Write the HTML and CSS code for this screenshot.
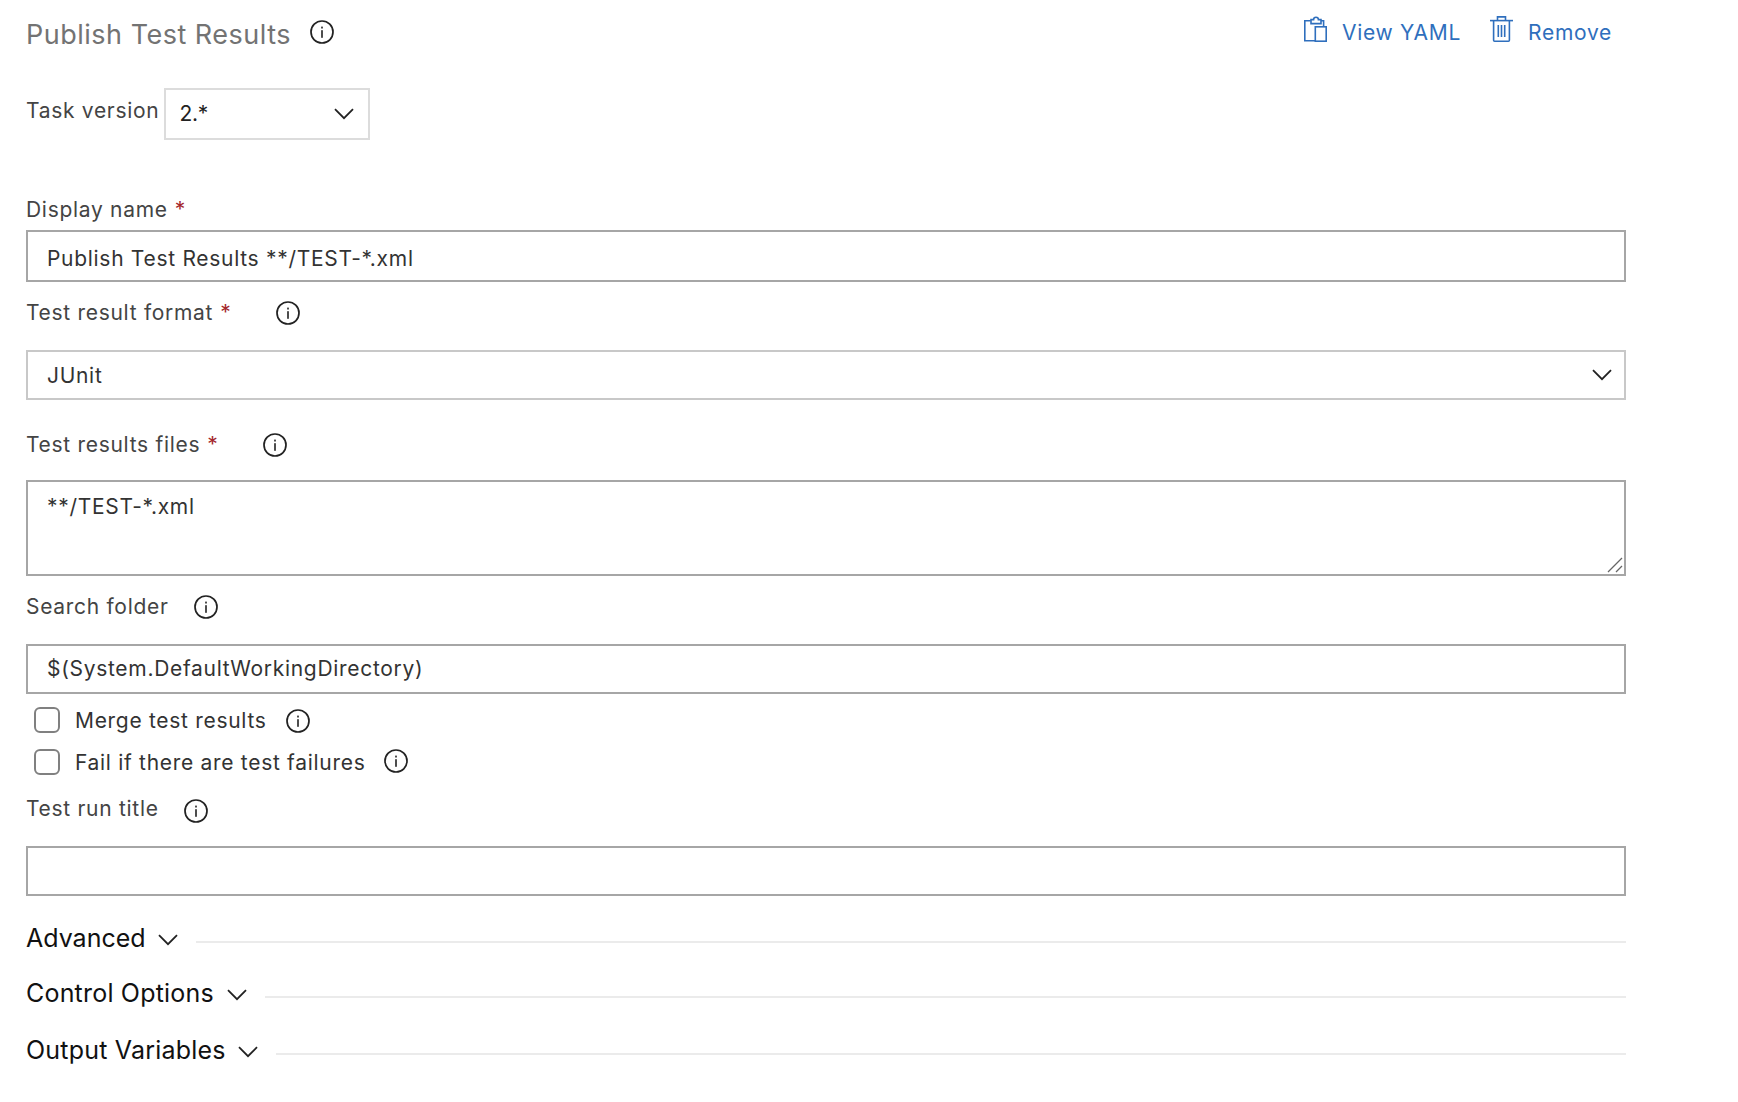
FILE: index.html
```html
<!DOCTYPE html>
<html lang="en">
<head>
<meta charset="utf-8">
<title>Publish Test Results</title>
<link rel="stylesheet" href="styles.css">
</head>
<body>
<svg class="defs" width="0" height="0" aria-hidden="true">
  <symbol id="info" viewBox="0 0 24 24">
    <circle cx="12" cy="12" r="11" fill="none" stroke="currentColor" stroke-width="1.7"/>
    <rect x="11.2" y="10.2" width="1.6" height="7.6" fill="currentColor"/>
    <rect x="11.2" y="6.6" width="1.6" height="1.9" fill="currentColor"/>
  </symbol>
  <symbol id="chev" viewBox="0 0 20 12">
    <path d="M1 1.2 10 10.2 19 1.2" fill="none" stroke="currentColor" stroke-width="1.8"/>
  </symbol>
</svg>
<main class="page">
  <header class="head">
    <div class="title-wrap">
      <h1 class="title">Publish Test Results</h1>
      <svg class="info"><use href="#info"/></svg>
    </div>
    <div class="actions">
      <a class="action action-yaml">
        <svg class="act-icon" viewBox="0 0 23 26" fill="none" stroke="currentColor" stroke-width="1.6">
          <path d="M11 24.8H.8V4.8h6"/><path d="M17 4.8h2.6v6"/><path d="M7 7.6V3.6h2.6a2.4 2.4 0 0 1 4.8 0H17v4z"/><rect x="11.3" y="10.8" width="10.9" height="14.4"/>
        </svg>
        <span>View YAML</span>
      </a>
      <a class="action action-remove">
        <svg class="act-icon" viewBox="0 0 23 26" fill="none" stroke="currentColor" stroke-width="1.6">
          <path d="M0 4.6h23"/><path d="M7.5 4.6V.9h8v3.7"/><path d="M3.6 4.6v19.6a1 1 0 0 0 1 1h13.8a1 1 0 0 0 1-1V4.6"/><path d="M8.3 9v12M11.5 9v12M14.7 9v12"/>
        </svg>
        <span>Remove</span>
      </a>
    </div>
  </header>

  <div class="version-row">
    <span class="label">Task version</span>
    <div class="version-select">
      <span class="version-value">2.*</span>
      <svg class="chev"><use href="#chev"/></svg>
    </div>
  </div>

  <div class="label-row lr-display"><span class="label">Display name</span><span class="req">*</span></div>
  <div class="field input name-input">Publish Test Results **/TEST-*.xml</div>

  <div class="label-row lr-format">
    <span class="label">Test result format</span><span class="req">*</span>
    <svg class="info gap-req"><use href="#info"/></svg>
  </div>
  <div class="field select">
    <span>JUnit</span>
    <svg class="chev"><use href="#chev"/></svg>
  </div>

  <div class="label-row lr-files">
    <span class="label">Test results files</span><span class="req">*</span>
    <svg class="info gap-req"><use href="#info"/></svg>
  </div>
  <div class="field textarea">
    **/TEST-*.xml
    <svg class="grip" viewBox="0 0 16 16" fill="none" stroke="#666" stroke-width="1.3"><path d="M1 15 15 1M9 15l6-6"/></svg>
  </div>

  <div class="label-row lr-search">
    <span class="label">Search folder</span>
    <svg class="info gap-plain"><use href="#info"/></svg>
  </div>
  <div class="field input">$(System.DefaultWorkingDirectory)</div>

  <div class="check-row cr-merge">
    <span class="box"></span><span class="check-label">Merge test results</span>
    <svg class="info gap-check"><use href="#info"/></svg>
  </div>
  <div class="check-row cr-fail">
    <span class="box"></span><span class="check-label">Fail if there are test failures</span>
    <svg class="info gap-check"><use href="#info"/></svg>
  </div>

  <div class="label-row lr-title">
    <span class="label">Test run title</span>
    <svg class="info gap-plain"><use href="#info"/></svg>
  </div>
  <div class="field input"></div>

  <div class="section s-first"><span class="sec-name">Advanced</span><svg class="chev sec-chev"><use href="#chev"/></svg><span class="rule"></span></div>
  <div class="section s-second"><span class="sec-name">Control Options</span><svg class="chev sec-chev"><use href="#chev"/></svg><span class="rule"></span></div>
  <div class="section s-third"><span class="sec-name">Output Variables</span><svg class="chev sec-chev"><use href="#chev"/></svg><span class="rule"></span></div>
</main>
</body>
</html>
```
FILE: styles.css
```css
* { box-sizing: border-box; }
html, body { margin: 0; background: #fff; }
body { font-family: Inter, "Noto Sans", "Liberation Sans", sans-serif; color: #333; font-size: 21px; letter-spacing: 0.7px; line-height: 26px; }
.defs { position: absolute; }
.page { width: 1600px; margin-left: 26px; height: 1102px; overflow: hidden; }

.head { display: flex; justify-content: space-between; align-items: center; height: 63px; }
.title-wrap { display: flex; align-items: center; padding-top: 6px; }
.title { margin: 0; font-size: 27px; font-weight: 400; line-height: 32px; letter-spacing: 0.5px; color: #737373; }
.info { width: 24px; height: 24px; color: #222; flex: none; }
.title-wrap .info { margin-left: 19px; margin-top: -6px; }
.actions { display: flex; align-items: center; padding-right: 14px; padding-top: 2px; color: #2f6fbd; }
.action { display: flex; align-items: center; color: #2f6fbd; letter-spacing: 0.72px; }
.action-remove { margin-left: 29px; }
.act-icon { width: 23px; height: 26px; margin-right: 15px; margin-top: -7px; }

.version-row { display: flex; align-items: flex-start; margin-top: 25px; }
.version-row .label { margin-top: 10px; margin-right: 5px; }
.version-select { width: 206px; height: 52px; border: 2px solid #dcdcdc; display: flex; align-items: center; justify-content: space-between; padding: 0 14px 0 13px; color: #222; }
.version-value { letter-spacing: -0.3px; }

.chev { width: 20px; height: 12px; color: #222; flex: none; }

.label { color: #444; }
.req { color: #a4262c; margin-left: 7px; }
.label-row { display: flex; align-items: center; height: 26px; }
.lr-display { margin-top: 57px; margin-bottom: 7px; }
.lr-format { margin-top: 18px; margin-bottom: 24px; }
.lr-files { margin-top: 32px; margin-bottom: 22px; }
.lr-search { margin-top: 18px; margin-bottom: 24px; }
.lr-title { margin-top: 21px; margin-bottom: 24px; }
.gap-req { margin-left: 45px; }
.gap-plain { margin-left: 25px; }
.gap-check { margin-left: 19px; }
.lr-title .info { margin-top: 3px; }
.cr-merge .info { margin-top: 2px; }
.cr-fail .info { margin-top: -2px; }

.field { border: 2px solid #a6a6a6; padding: 0 19px; color: #333; width: 100%; }
.input { height: 50px; display: flex; align-items: center; }
.name-input { height: 52px; padding-top: 5px; }
.select { height: 50px; display: flex; align-items: center; justify-content: space-between; border-color: #c8c8c8; padding-top: 0; padding-right: 12px; }
.select span { margin-top: 2px; }
.textarea { height: 96px; position: relative; padding-top: 12px; }
.grip { position: absolute; right: 1px; bottom: 1px; width: 16px; height: 16px; }

.check-row { display: flex; align-items: center; padding-left: 8px; height: 26px; }
.cr-merge { margin-top: 13px; }
.cr-fail { margin-top: 16px; }
.box { width: 26px; height: 26px; border: 2px solid #808080; border-radius: 6px; background: #fff; flex: none; }
.check-label { margin-left: 15px; margin-top: 2px; color: #333; }

.section { display: flex; align-items: center; height: 32px; margin-top: 24px; color: #111; }
.s-first { margin-top: 26px; }
.s-second { margin-top: 23px; }
.s-third { margin-top: 25px; }
.sec-name { font-size: 25px; line-height: 32px; letter-spacing: 0.2px; }
.s-first .sec-name { letter-spacing: 0; }
.sec-chev { margin-left: 12px; margin-top: 4px; }
.s-second .sec-chev { margin-left: 13px; }
.rule { flex: 1; height: 2px; background: #ebebeb; margin-left: 18px; margin-top: 7px; }
```
